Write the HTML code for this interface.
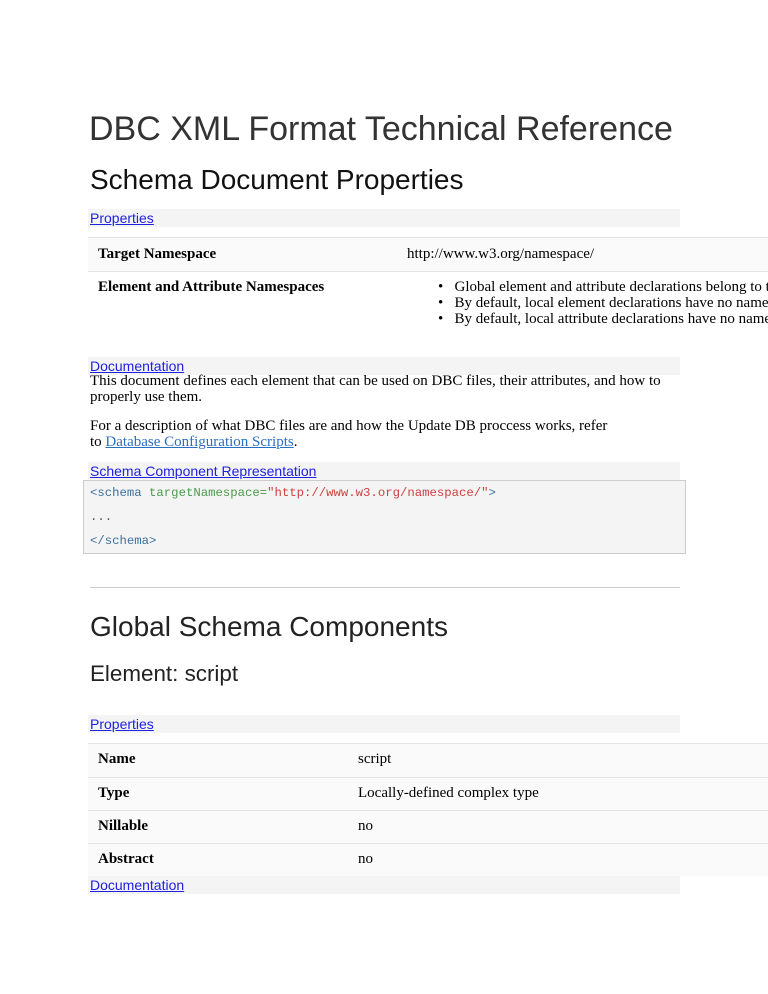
<!DOCTYPE html>
<html><head><meta charset="utf-8">
<style>
body{margin:0;width:768px;height:994px;overflow:hidden;background:#fff;position:relative;font-family:"Liberation Serif",serif;color:#000}
.a{position:absolute;white-space:nowrap}
.h1{font-family:"Liberation Sans",sans-serif;font-size:34px;color:#333}
.cal{font-family:"Liberation Sans",sans-serif}
.bar{position:absolute;left:88px;width:592px;background:#f4f4f4;height:18px}
.bar a{font-family:"Liberation Sans",sans-serif;font-size:14px;color:#2020e0;text-decoration:underline;position:absolute;left:2px;top:0px;line-height:18px}
.row{position:absolute;left:88px;width:680px;background:#fafafa;border-top:1.5px solid #e4e4e4}
.t{font-size:15px}
.b{font-weight:bold}
.code{font-family:"Liberation Mono",monospace;font-size:12.3px}
</style></head><body>
<div class="a h1" style="left:89px;top:110px">DBC XML Format Technical Reference</div>
<div class="a cal" style="left:90px;top:164px;font-size:28px;color:#111">Schema Document Properties</div>

<div class="bar" style="top:209px"><a>Properties</a></div>
<div class="row" style="top:237px;height:33px"></div>
<div class="row" style="top:271px;height:80px;background:#fff"></div>
<div class="a t b" style="left:98px;top:246px">Target Namespace</div>
<div class="a t" style="left:407px;top:246px">http://www.w3.org/namespace/</div>
<div class="a t b" style="left:98px;top:279px">Element and Attribute Namespaces</div>
<div class="a t" style="left:438px;top:279px;line-height:16px">•&nbsp;&nbsp;&nbsp;Global element and attribute declarations belong to t<br>•&nbsp;&nbsp;&nbsp;By default, local element declarations have no name<br>•&nbsp;&nbsp;&nbsp;By default, local attribute declarations have no name</div>

<div class="bar" style="top:357px"><a>Documentation</a></div>
<div class="a t" style="left:90px;top:373px;line-height:16px">This document defines each element that can be used on DBC files, their attributes, and how to<br>properly use them.</div>
<div class="a t" style="left:90px;top:418px;line-height:16px">For a description of what DBC files are and how the Update DB proccess works, refer<br>to <span style="color:#2a6fbf;text-decoration:underline">Database Configuration Scripts</span>.</div>

<div class="bar" style="top:462px"><a>Schema Component Representation</a></div>
<div class="a" style="left:83px;top:480px;width:601px;height:72px;background:#f4f4f4;border:1px solid #ccc"></div>
<div class="a code" style="left:90px;top:486px;color:#3b6f9e">&lt;schema <span style="color:#4a9a4a">targetNamespace=</span><span style="color:#d04040">"http://www.w3.org/namespace/"</span>&gt;</div>
<div class="a code" style="left:90px;top:510px;color:#555">...</div>
<div class="a code" style="left:90px;top:534px;color:#3b6f9e">&lt;/schema&gt;</div>

<div class="a" style="left:90px;top:587px;width:590px;height:1px;background:#ccc"></div>
<div class="a cal" style="left:90px;top:611px;font-size:28px;color:#222">Global Schema Components</div>
<div class="a cal" style="left:90px;top:661px;font-size:22.4px;color:#222">Element: script</div>

<div class="bar" style="top:715px"><a>Properties</a></div>
<div class="row" style="top:743px;height:33px"></div>
<div class="row" style="top:777px;height:32px"></div>
<div class="row" style="top:810px;height:32px"></div>
<div class="row" style="top:843px;height:32px"></div>
<div class="a t b" style="left:98px;top:751px">Name</div>
<div class="a t" style="left:358px;top:751px">script</div>
<div class="a t b" style="left:98px;top:785px">Type</div>
<div class="a t" style="left:358px;top:785px">Locally-defined complex type</div>
<div class="a t b" style="left:98px;top:818px">Nillable</div>
<div class="a t" style="left:358px;top:818px">no</div>
<div class="a t b" style="left:98px;top:851px">Abstract</div>
<div class="a t" style="left:358px;top:851px">no</div>
<div class="bar" style="top:876px"><a>Documentation</a></div>
</body></html>
